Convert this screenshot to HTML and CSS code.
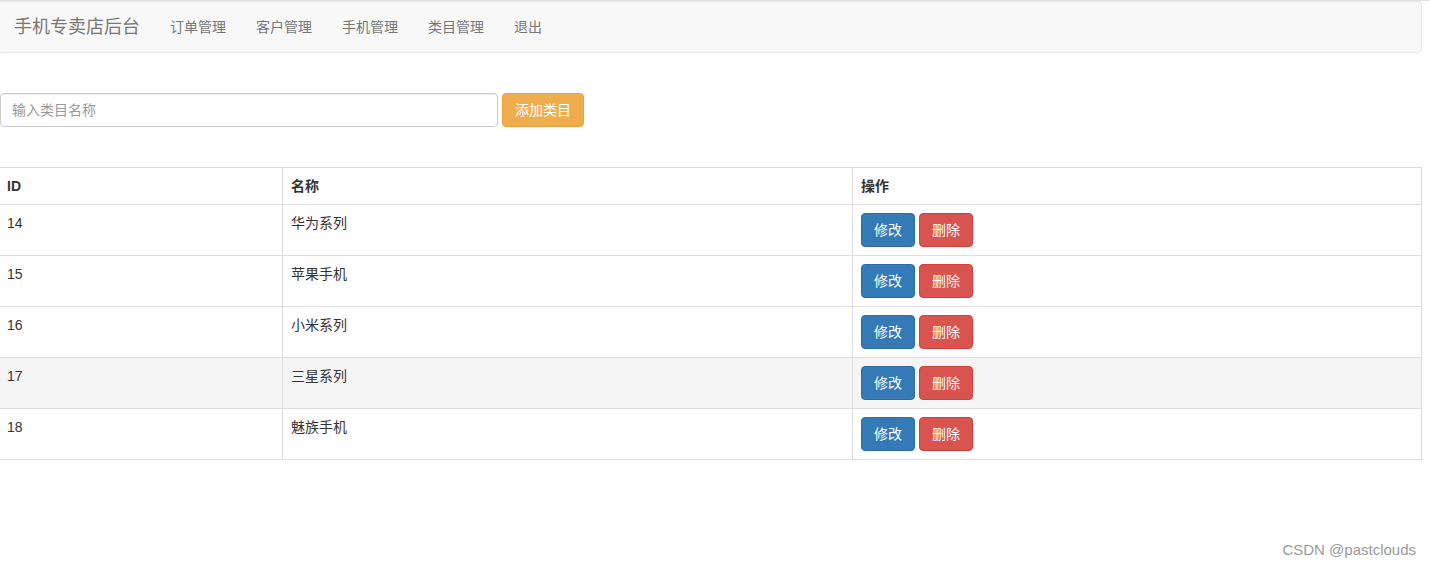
FILE: index.html
```html
<!DOCTYPE html>
<html lang="zh-CN">
<head>
<meta charset="utf-8">
<title>手机专卖店后台</title>
<link rel="stylesheet" href="styles.css">
</head>
<body>
<div class="page">
  <nav class="navbar">
    <a class="brand" href="#">手机专卖店后台</a>
    <ul class="nav">
      <li><a href="#">订单管理</a></li>
      <li><a href="#">客户管理</a></li>
      <li><a href="#">手机管理</a></li>
      <li><a href="#">类目管理</a></li>
      <li><a href="#">退出</a></li>
    </ul>
  </nav>
  <form class="add-form">
    <input class="form-control" type="text" placeholder="输入类目名称">
    <button type="button" class="btn btn-warning">添加类目</button>
  </form>
  <table class="table">
    <thead>
      <tr><th class="c1">ID</th><th class="c2">名称</th><th>操作</th></tr>
    </thead>
    <tbody>
      <tr><td>14</td><td>华为系列</td><td><button class="btn btn-primary">修改</button> <button class="btn btn-danger">删除</button></td></tr>
      <tr><td>15</td><td>苹果手机</td><td><button class="btn btn-primary">修改</button> <button class="btn btn-danger">删除</button></td></tr>
      <tr><td>16</td><td>小米系列</td><td><button class="btn btn-primary">修改</button> <button class="btn btn-danger">删除</button></td></tr>
      <tr class="hover"><td>17</td><td>三星系列</td><td><button class="btn btn-primary">修改</button> <button class="btn btn-danger">删除</button></td></tr>
      <tr><td>18</td><td>魅族手机</td><td><button class="btn btn-primary">修改</button> <button class="btn btn-danger">删除</button></td></tr>
    </tbody>
  </table>
</div>
<div class="watermark">CSDN @pastclouds</div>
</body>
</html>
```

FILE: styles.css
```css
* { box-sizing: border-box; }
html, body { margin: 0; padding: 0; background: #fff; }
body {
  font-family: "Liberation Sans", Arial, "Noto Sans CJK SC", sans-serif;
  font-size: 14px;
  line-height: 20px;
  color: #333;
  height: 568px;
  overflow: hidden;
  border-top: 1px solid #e2e2e2;
}
.page {
  margin: 0 8px 0 -2px;
}
.navbar {
  display: flex;
  align-items: center;
  height: 52px;
  background: #f8f8f8;
  border: 1px solid #e7e7e7;
  border-radius: 4px;
}
.brand {
  padding: 15px 15px;
  font-size: 18px;
  line-height: 20px;
  color: #777;
  text-decoration: none;
}
.nav {
  display: flex;
  margin: 0;
  padding: 0;
  list-style: none;
}
.nav a {
  display: block;
  padding: 15px 15px;
  color: #777;
  text-decoration: none;
  line-height: 20px;
}
.add-form {
  display: flex;
  gap: 4px;
  margin: 40px 0 40px 2px;
}
.form-control {
  width: 498px;
  height: 34px;
  padding: 6px 11px;
  font: inherit;
  color: #555;
  border: 1px solid #ccc;
  border-radius: 4px;
  box-shadow: inset 0 1px 1px rgba(0,0,0,.075);
  outline: none;
}
.form-control::placeholder { color: #999; }
.btn {
  display: inline-block;
  height: 34px;
  padding: 6px 12px;
  font: inherit;
  line-height: 20px;
  color: #fff;
  border: 1px solid transparent;
  border-radius: 4px;
  cursor: pointer;
  vertical-align: middle;
}
.btn-warning { background: #f0ad4e; border-color: #eea236; }
.btn-primary { background: #337ab7; border-color: #2e6da4; }
.btn-danger { background: #d9534f; border-color: #d43f3a; }
.table {
  width: 100%;
  border-collapse: collapse;
  border: 1px solid #ddd;
}
.table th, .table td {
  border: 1px solid #ddd;
  padding: 8px;
  text-align: left;
  vertical-align: top;
  line-height: 20px;
}
.table th { font-weight: bold; }
.c1 { width: 284px; }
.c2 { width: 570px; }
.table tr.hover { background: #f5f5f5; }
.watermark {
  position: absolute;
  right: 14px;
  top: 540px;
  font-size: 15px;
  line-height: 20px;
  color: #9a9a9a;
}
```
